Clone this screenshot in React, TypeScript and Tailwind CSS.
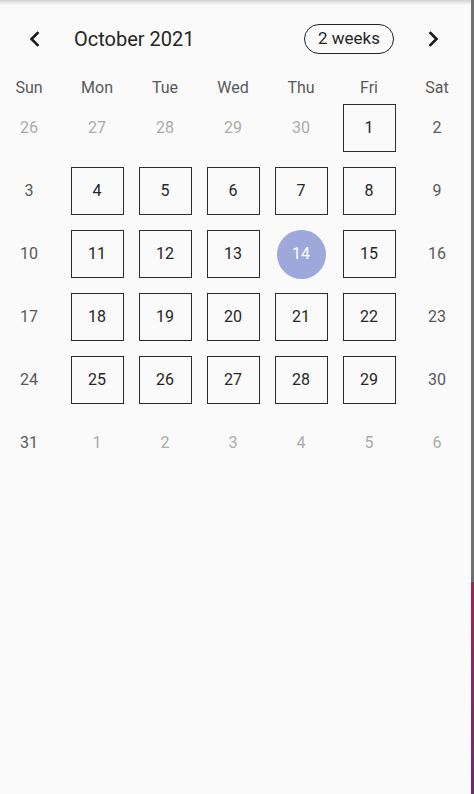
const weekdays = ["Sun", "Mon", "Tue", "Wed", "Thu", "Fri", "Sat"];

type Day = { n: number; kind: "out" | "plain" | "box" | "today" };

const days: Day[] = [
  ...[26, 27, 28, 29, 30].map((n) => ({ n, kind: "out" as const })),
  { n: 1, kind: "box" },
  { n: 2, kind: "plain" },
];

for (let n = 3; n <= 31; n++) {
  const col = (n + 4) % 7;
  let kind: Day["kind"] = col === 0 || col === 6 ? "plain" : "box";
  if (n === 14) kind = "today";
  if (n === 31) kind = "plain";
  days.push({ n, kind });
}
[1, 2, 3, 4, 5, 6].forEach((n) => days.push({ n, kind: "out" }));

function Chevron({ dir }: { dir: "left" | "right" }) {
  return (
    <svg width="24" height="24" viewBox="0 0 24 24" fill="none" stroke="#1a1a1a" strokeWidth="2.6" strokeLinecap="square">
      {dir === "left" ? <path d="M14.5 6 L8.5 12 L14.5 18" /> : <path d="M9.5 6 L15.5 12 L9.5 18" />}
    </svg>
  );
}

function DayCell({ day }: { day: Day }) {
  if (day.kind === "box") {
    return (
      <div className="w-[53px] h-[48px] border-[1.5px] border-[#2b2b2b] flex items-center justify-center text-[#262626]">
        {day.n}
      </div>
    );
  }
  if (day.kind === "today") {
    return (
      <div className="w-[49px] h-[49px] rounded-full bg-[#9fa8da] flex items-center justify-center text-white">
        {day.n}
      </div>
    );
  }
  return <span className={day.kind === "out" ? "text-[#ababab]" : "text-[#595959]"}>{day.n}</span>;
}

export default function App() {
  return (
    <div className="flex h-[794px] bg-[#fafafa] overflow-hidden" style={{ fontFamily: "Roboto, 'Noto Sans', sans-serif" }}>
      <div className="flex-1 flex flex-col">
        <div className="h-[5px] bg-gradient-to-b from-[#d2d2d2] to-[#fafafa]" />
        <header className="h-[68px] flex items-center pl-[23px] pr-[26px]">
          <Chevron dir="left" />
          <h1 className="ml-[27px] text-[20px] text-[#262626]">October 2021</h1>
          <div className="flex-1" />
          <button className="w-[90px] h-[30px] rounded-full border-[1.5px] border-[#222] text-[17px] text-[#262626] flex items-center justify-center mr-[27px]">
            2 weeks
          </button>
          <Chevron dir="right" />
        </header>
        <div className="w-[476px] -ml-[5px] grid grid-cols-7 h-[30px] items-center text-[16px] text-[#595959]">
          {weekdays.map((d) => (
            <div key={d} className="text-center">
              {d}
            </div>
          ))}
        </div>
        <div className="w-[476px] -ml-[5px] mt-[1px] grid grid-cols-7 auto-rows-[48px] gap-y-[15px] text-[16px]">
          {days.map((d, i) => (
            <div key={i} className="flex items-center justify-center">
              <DayCell day={d} />
            </div>
          ))}
        </div>
      </div>
      <div className="w-[3px] flex flex-col">
        <div className="h-[582px] bg-[#6f6f6f]" />
        <div className="flex-1 bg-gradient-to-b from-[#a3214e] to-[#6a2b6d]" />
      </div>
    </div>
  );
}
